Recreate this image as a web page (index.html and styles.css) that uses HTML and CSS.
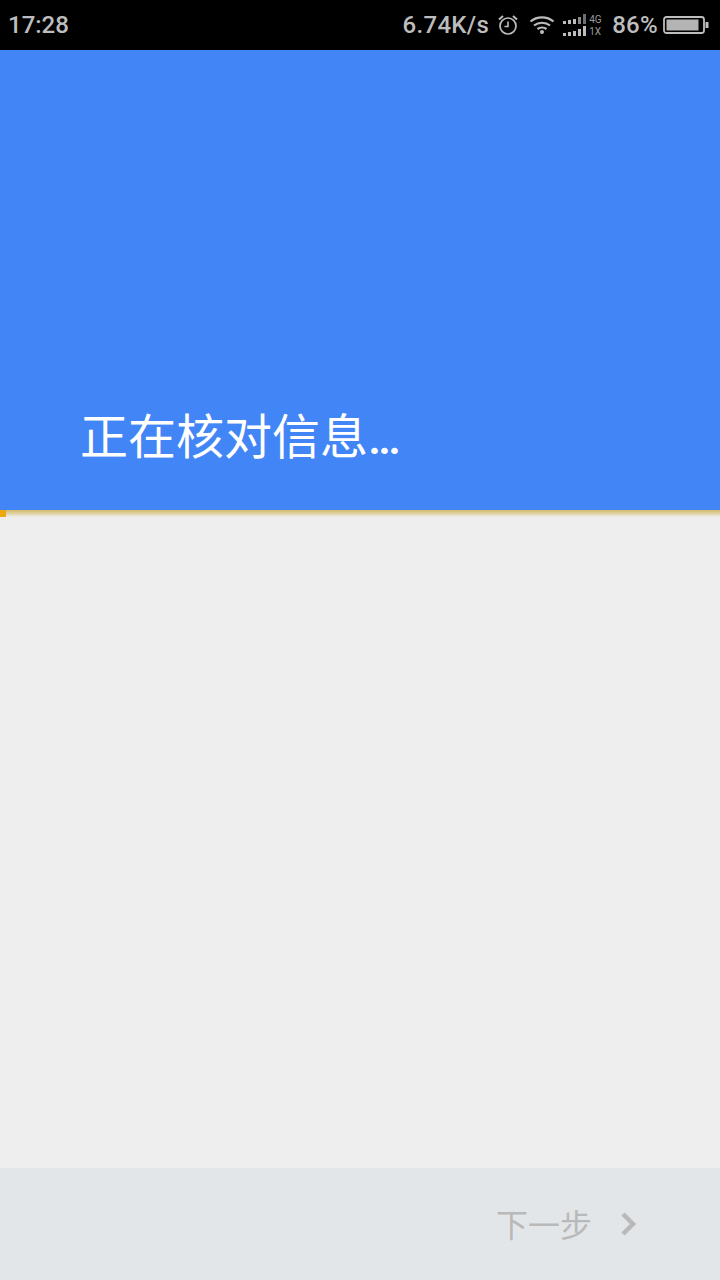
FILE: index.html
```html
<!DOCTYPE html>
<html>
<head>
    <title>正在核对信息</title>
    <link rel="stylesheet" href="styles.css">
</head>
<body>

<div class="statusBar">
    <span class="clock">17:28</span>
    <div class="statusRight">
        <span class="speed">6.74K/s</span>
        <svg class="alarmIcon" width="22" height="22" viewBox="0 0 22 22" fill="none" stroke="#bdbdbd">
            <circle cx="11" cy="12" r="8" stroke-width="1.7"/>
            <path d="M11 7.500V12.500H7.500" stroke-width="1.6"/>
            <path d="M2 5.500L6 2M20 5.500L16 2" stroke-width="2"/>
        </svg>
        <svg class="wifiIcon" width="26" height="20" viewBox="0 0 26 20" fill="none" stroke="#bdbdbd" stroke-width="2.2">
            <path d="M1.500 6.500C8 1 18 1 24.500 6.500"/>
            <path d="M5 10.500C9.500 6.800 16.500 6.800 21 10.500"/>
            <path d="M8.500 14C11 12.200 15 12.200 17.500 14"/>
            <circle cx="13" cy="17" r="2" fill="#bdbdbd" stroke="none"/>
        </svg>
        <div class="signal">
            <div class="signalRow">
                <svg width="26" height="11" viewBox="0 0 26 11" fill="#bdbdbd">
                    <rect x="0" y="7" width="3" height="3"/>
                    <rect x="5" y="6" width="3" height="4"/>
                    <rect x="10" y="5" width="3" height="5"/>
                    <rect x="15" y="3" width="3" height="7" fill="#8a8a8a"/>
                    <rect x="20" y="0" width="3" height="10" fill="#6e6e6e"/>
                </svg>
                <span class="netLabel">4G</span>
            </div>
            <div class="signalRow">
                <svg width="26" height="11" viewBox="0 0 26 11" fill="#bdbdbd">
                    <rect x="0" y="7" width="3" height="3"/>
                    <rect x="5" y="6" width="3" height="4"/>
                    <rect x="10" y="5" width="3" height="5"/>
                    <rect x="15" y="3" width="3" height="7"/>
                    <rect x="20" y="0" width="3" height="10"/>
                </svg>
                <span class="netLabel">1X</span>
            </div>
        </div>
        <span class="percent">86%</span>
        <svg class="batteryIcon" width="46" height="18" viewBox="0 0 46 18">
            <rect x="1" y="1" width="40" height="16" rx="2.500" fill="none" stroke="#bdbdbd" stroke-width="1.800"/>
            <rect x="3.500" y="3.500" width="32" height="11" fill="#b4b4b4"/>
            <rect x="42.500" y="6" width="3" height="6" fill="#bdbdbd"/>
        </svg>
    </div>
</div>

<div class="hero">
    <div class="heroTitle">正在核对信息<span class="heroDots">...</span></div>
</div>

<div class="progress">
    <div class="progressFill"></div>
</div>

<div class="content"></div>

<div class="footer">
    <span class="nextLabel">下一步</span>
    <svg class="nextIcon" width="18" height="26" viewBox="0 0 18 26" fill="none" stroke="#b9b9b9" stroke-width="4.500">
        <path d="M3 3L13 13L3 23"/>
    </svg>
</div>

</body>
</html>
```

FILE: styles.css
```css
html, body {
    margin: 0;
    height: 100%;
}

body {
    display: flex;
    flex-direction: column;
    height: 1280px;
    overflow: hidden;
    background: #eeeeee;
    font-family: Roboto, "Noto Sans CJK SC", sans-serif;
}

/*---------Status bar-------------*/
.statusBar {
    height: 50px;
    flex-shrink: 0;
    display: flex;
    align-items: center;
    justify-content: space-between;
    padding: 0 11px 0 8px;
    background: #000000;
    color: #bdbdbd;
    font-size: 24px;
    font-weight: 500;
}

.statusRight {
    display: flex;
    align-items: center;
}

.speed {
    margin-right: 8px;
    letter-spacing: 0.3px;
}

.wifiIcon {
    margin-left: 10px;
}

.signal {
    margin-left: 8px;
    display: flex;
    flex-direction: column;
    gap: 1px;
}

.signalRow {
    display: flex;
    align-items: center;
    height: 11px;
}

.netLabel {
    font-size: 10px;
    font-weight: 400;
    color: #9a9a9a;
    width: 13px;
}

.percent {
    margin-left: 10px;
    margin-right: 5px;
    letter-spacing: 0.3px;
}

/*---------Hero-------------*/
.hero {
    height: 460px;
    flex-shrink: 0;
    box-sizing: border-box;
    padding: 356px 0 0 80px;
    background: #4285f6;
}

.heroTitle {
    color: #ffffff;
    font-size: 48px;
    line-height: 64px;
}

.heroDots {
    font-weight: 500;
    letter-spacing: -3.3px;
}

.progress {
    height: 7px;
    flex-shrink: 0;
    background: linear-gradient(#d3b866, #e6dcc0 70%, #eeeeee);
}

.progressFill {
    width: 6px;
    height: 100%;
    background: #eba80f;
}

.content {
    flex-grow: 1;
    background: #eeeeee;
}

/*---------Footer-------------*/
.footer {
    height: 112px;
    flex-shrink: 0;
    display: flex;
    align-items: center;
    justify-content: flex-end;
    padding-right: 82px;
    background: #e2e6e9;
}

.nextLabel {
    margin-right: 28px;
    margin-top: -2px;
    color: #b9b9b9;
    font-size: 32px;
}
```
